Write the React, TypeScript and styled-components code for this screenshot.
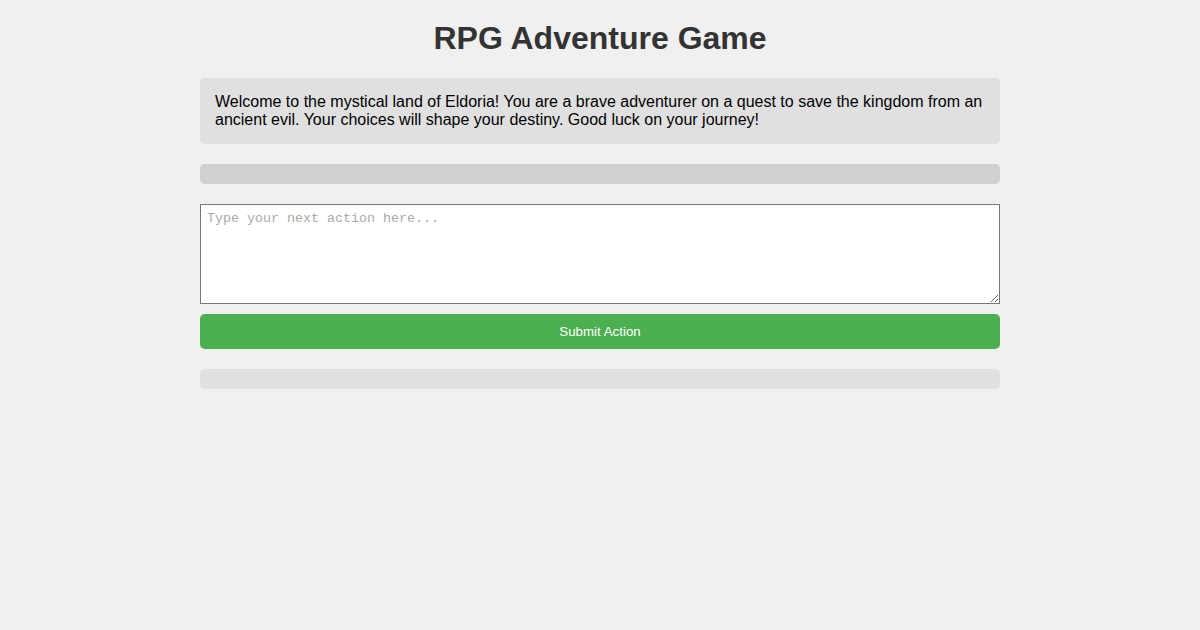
import React, { useState } from "react";
import styled, { createGlobalStyle } from "styled-components";

const GlobalStyle = createGlobalStyle`
  html, body {
    margin: 0;
    padding: 0;
    background: #f0f0f0;
    font-family: "Liberation Sans", Arial, sans-serif;
  }
`;

const Page = styled.div`
  max-width: 800px;
  margin: 0 auto;
  padding-top: 20px;
  display: flex;
  flex-direction: column;
`;

const Title = styled.h1`
  margin: 0 0 21px;
  text-align: center;
  font-size: 32px;
  font-weight: bold;
  color: #333;
`;

const Story = styled.div`
  background: #e0e0e0;
  border-radius: 5px;
  padding: 15px;
  font-size: 16px;
  color: #000;
  line-height: normal;
`;

const Panel = styled.div<{ $tone: string }>`
  background: ${(p) => p.$tone};
  border-radius: 5px;
  padding: 10px;
  margin-top: 20px;
`;

const ActionInput = styled.textarea`
  box-sizing: border-box;
  width: 100%;
  height: 100px;
  margin: 20px 0 0;
  padding: 6px;
  border: 1px solid #767676;
  border-radius: 0;
  background: #fff;
  font-family: "Liberation Mono", "Courier New", monospace;
  font-size: 13.33px;
  display: block;
  &::placeholder {
    color: #aaaaaa;
  }
`;

const SubmitButton = styled.button`
  margin-top: 10px;
  width: 100%;
  padding: 10px;
  border: none;
  border-radius: 5px;
  background: #4caf50;
  color: #fff;
  font-family: "Liberation Sans", Arial, sans-serif;
  font-size: 13.33px;
  cursor: pointer;
`;

export default function App() {
  const [action, setAction] = useState("");
  return (
    <>
      <GlobalStyle />
      <Page>
        <Title>RPG Adventure Game</Title>
        <Story>
          Welcome to the mystical land of Eldoria! You are a brave adventurer on a quest to save the
          kingdom from an ancient evil. Your choices will shape your destiny. Good luck on your
          journey!
        </Story>
        <Panel $tone="#d0d0d0" />
        <ActionInput
          placeholder="Type your next action here..."
          value={action}
          onChange={(e) => setAction(e.target.value)}
        />
        <SubmitButton onClick={() => setAction("")}>Submit Action</SubmitButton>
        <Panel $tone="#e0e0e0" />
      </Page>
    </>
  );
}
